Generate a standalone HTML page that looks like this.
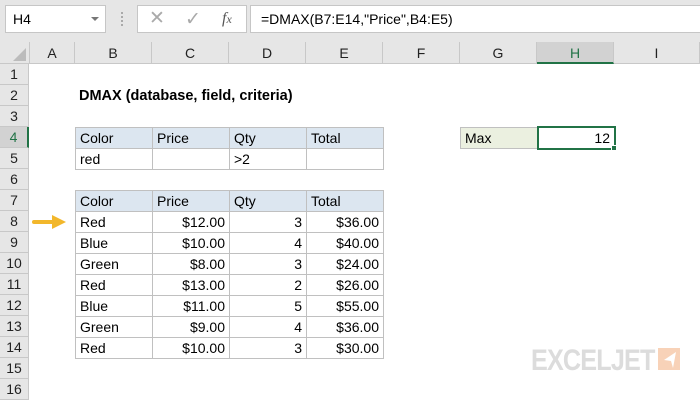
<!DOCTYPE html>
<html><head><meta charset="utf-8"><style>
*{margin:0;padding:0;box-sizing:border-box}
body{width:700px;height:400px;overflow:hidden;background:#fff;font-family:"Liberation Sans",sans-serif;position:relative;color:#000}
.a{position:absolute}
.top{left:0;top:0;width:700px;height:42px;background:#e6e6e6}
.box{background:#fff;border:1px solid #c6c6c6}
.ch{position:absolute;top:42px;height:22px;background:#e6e6e6;border-right:1px solid #c8c8c8;border-bottom:1px solid #c8c8c8;font-size:14px;text-align:center;line-height:22px;color:#222}
.rh{position:absolute;left:0;width:29px;height:21px;background:#e6e6e6;border-bottom:1px solid #c8c8c8;border-right:1px solid #c8c8c8;font-size:14px;text-align:center;line-height:21px;color:#222}
.c{position:absolute;height:22px;width:78px;border:1px solid #c0c0c0;font-size:14px;line-height:20px;padding:0 4px;white-space:nowrap}
.h{background:#dce6f0}
.r{text-align:right}
</style></head><body>
<div class="a top"></div>
<div class="a box" style="left:5px;top:5px;width:101px;height:28px;font-size:14px;line-height:26px;padding-left:7px">H4</div>
<div class="a" style="left:91px;top:17px;width:0;height:0;border-left:4px solid transparent;border-right:4px solid transparent;border-top:4px solid #777"></div>
<div class="a" style="left:121px;top:12px;width:2px;height:14px;border-left:2px dotted #aaa"></div>
<div class="a box" style="left:137px;top:5px;width:110px;height:28px"></div>
<div class="a" style="left:149px;top:9px;font-size:19px;color:#aaa;line-height:20px">✕</div>
<div class="a" style="left:185px;top:10px;font-size:19px;color:#aaa;line-height:20px">✓</div>
<div class="a" style="left:222px;top:10px;font-size:16px;font-style:italic;font-family:'Liberation Serif',serif;color:#555">f<span style="font-size:12px">x</span></div>
<div class="a box" style="left:250px;top:5px;width:452px;height:28px;font-size:14px;line-height:26px;padding-left:10px">=DMAX(B7:E14,"Price",B4:E5)</div>

<div class="ch" style="left:0;width:30px"></div>
<div class="a" style="left:13px;top:48px;width:0;height:0;border-left:13px solid transparent;border-bottom:13px solid #bcbcbc"></div>
<div class="ch" style="left:30px;width:45px">A</div>
<div class="ch" style="left:75px;width:77px">B</div>
<div class="ch" style="left:152px;width:77px">C</div>
<div class="ch" style="left:229px;width:77px">D</div>
<div class="ch" style="left:306px;width:77px">E</div>
<div class="ch" style="left:383px;width:77px">F</div>
<div class="ch" style="left:460px;width:77px">G</div>
<div class="ch" style="left:537px;width:77px;background:#d2d2d2;border-bottom:2px solid #217346;color:#217346">H</div>
<div class="ch" style="left:614px;width:86px">I</div>

<div class="rh" style="top:64px">1</div>
<div class="rh" style="top:85px">2</div>
<div class="rh" style="top:106px">3</div>
<div class="rh" style="top:127px;background:#d2d2d2;border-right:2px solid #217346;color:#217346">4</div>
<div class="rh" style="top:148px">5</div>
<div class="rh" style="top:169px">6</div>
<div class="rh" style="top:190px">7</div>
<div class="rh" style="top:211px">8</div>
<div class="rh" style="top:232px">9</div>
<div class="rh" style="top:253px">10</div>
<div class="rh" style="top:274px">11</div>
<div class="rh" style="top:295px">12</div>
<div class="rh" style="top:316px">13</div>
<div class="rh" style="top:337px">14</div>
<div class="rh" style="top:358px">15</div>
<div class="rh" style="top:379px">16</div>

<div class="a" style="left:79px;top:88px;font-size:14.5px;font-weight:bold">DMAX (database, field, criteria)</div>

<div class="c h" style="left:75px;top:127px">Color</div>
<div class="c h" style="left:152px;top:127px">Price</div>
<div class="c h" style="left:229px;top:127px">Qty</div>
<div class="c h" style="left:306px;top:127px">Total</div>
<div class="c" style="left:75px;top:148px">red</div>
<div class="c" style="left:152px;top:148px"></div>
<div class="c" style="left:229px;top:148px">&gt;2</div>
<div class="c" style="left:306px;top:148px"></div>

<div class="c h" style="left:75px;top:190px">Color</div>
<div class="c h" style="left:152px;top:190px">Price</div>
<div class="c h" style="left:229px;top:190px">Qty</div>
<div class="c h" style="left:306px;top:190px">Total</div>

<div class="c" style="left:75px;top:211px">Red</div><div class="c r" style="left:152px;top:211px">$12.00</div><div class="c r" style="left:229px;top:211px">3</div><div class="c r" style="left:306px;top:211px">$36.00</div>
<div class="c" style="left:75px;top:232px">Blue</div><div class="c r" style="left:152px;top:232px">$10.00</div><div class="c r" style="left:229px;top:232px">4</div><div class="c r" style="left:306px;top:232px">$40.00</div>
<div class="c" style="left:75px;top:253px">Green</div><div class="c r" style="left:152px;top:253px">$8.00</div><div class="c r" style="left:229px;top:253px">3</div><div class="c r" style="left:306px;top:253px">$24.00</div>
<div class="c" style="left:75px;top:274px">Red</div><div class="c r" style="left:152px;top:274px">$13.00</div><div class="c r" style="left:229px;top:274px">2</div><div class="c r" style="left:306px;top:274px">$26.00</div>
<div class="c" style="left:75px;top:295px">Blue</div><div class="c r" style="left:152px;top:295px">$11.00</div><div class="c r" style="left:229px;top:295px">5</div><div class="c r" style="left:306px;top:295px">$55.00</div>
<div class="c" style="left:75px;top:316px">Green</div><div class="c r" style="left:152px;top:316px">$9.00</div><div class="c r" style="left:229px;top:316px">4</div><div class="c r" style="left:306px;top:316px">$36.00</div>
<div class="c" style="left:75px;top:337px">Red</div><div class="c r" style="left:152px;top:337px">$10.00</div><div class="c r" style="left:229px;top:337px">3</div><div class="c r" style="left:306px;top:337px">$30.00</div>

<svg class="a" style="left:32px;top:214px" width="36" height="16"><path d="M2 8H22" stroke="#f2b72b" stroke-width="4" stroke-linecap="round"/><path d="M20 1L34 8L20 15Z" fill="#f2b72b"/></svg>

<div class="c" style="left:460px;top:127px;background:#ebf0e0;width:78px">Max</div>
<div class="c r" style="left:537px;top:126px;width:79px;height:24px;border:2px solid #217346">12</div>
<div class="a" style="left:611px;top:145px;width:6px;height:6px;background:#217346;border:1px solid #fff"></div>

<div class="a" style="left:531px;top:344px;font-size:30px;font-weight:bold;color:#dcdcdc;letter-spacing:-1px;transform:scaleX(0.84);transform-origin:left">EXCELJET</div>
<div class="a" style="left:658px;top:348px;width:22px;height:22px;background:#f8d2b8"></div>
<svg class="a" style="left:658px;top:348px" width="22" height="22"><path d="M18 4L6 12L13 13L15 20Z" fill="#fff"/></svg>
</body></html>
